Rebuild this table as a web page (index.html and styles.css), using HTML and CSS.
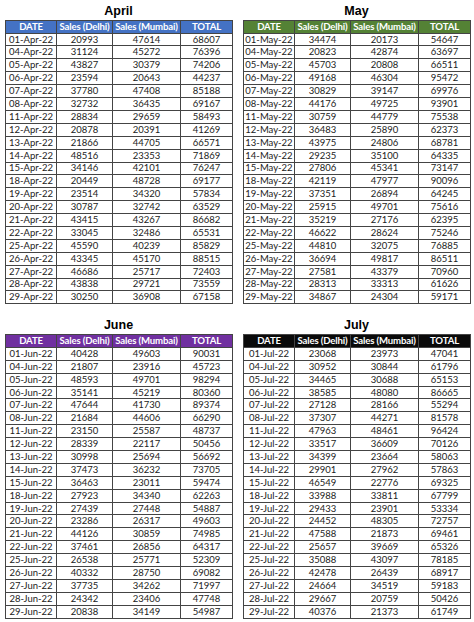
FILE: index.html
```html
<!DOCTYPE html>
<html>
<head>
<meta charset="utf-8">
<link rel="stylesheet" href="styles.css">
</head>
<body>
<div class="sheet" id="sheet"></div>
<script src="app.js"></script>
</body>
</html>
```
FILE: styles.css
```css
html, body {
  margin: 0;
  padding: 0;
  background: #ffffff;
}
.sheet {
  display: grid;
  grid-template-columns: 227px 227px;
  column-gap: 11px;
  row-gap: 13px;
  padding: 3px 0 0 5px;
}
.block {
  display: flex;
  flex-direction: column;
}
.title {
  height: 17px;
  line-height: 17px;
  text-align: center;
  font-family: "Liberation Sans", Arial, sans-serif;
  font-weight: bold;
  font-size: 12.5px;
  color: #000;
}
.tbl {
  width: 227px;
  border-collapse: collapse;
  table-layout: fixed;
  font-family: Lato, "Open Sans", sans-serif;
  font-size: 9.5px;
  color: #222;
  border: 1px solid #222;
}
.tbl th, .tbl td {
  border: 1px solid #444;
  padding: 0;
  text-align: center;
  white-space: nowrap;
  height: 11.9px;
  line-height: 10px;
}
.tbl th {
  color: #fff;
  font-weight: bold;
  font-size: 9.6px;
  letter-spacing: -0.15px;
  height: 11.6px;
}
.apr th { background: #4472c4; }
.may th { background: #548235; }
.jun th { background: #7030a0; }
.jul th { background: #0a0a0a; }
.c1 { width: 51px; }
.c2 { width: 56px; }
.c3 { width: 68px; }
.c4 { width: 52px; }
```
FILE: app.js
```js
const months = [
  {name: "April", cls: "apr", ab: "Apr", rows: [
    ["01",20993,47614,68607],["04",31124,45272,76396],["05",43827,30379,74206],["06",23594,20643,44237],
    ["07",37780,47408,85188],["08",32732,36435,69167],["11",28834,29659,58493],["12",20878,20391,41269],
    ["13",21866,44705,66571],["14",48516,23353,71869],["15",34146,42101,76247],["18",20449,48728,69177],
    ["19",23514,34320,57834],["20",30787,32742,63529],["21",43415,43267,86682],["22",33045,32486,65531],
    ["25",45590,40239,85829],["26",43345,45170,88515],["27",46686,25717,72403],["28",43838,29721,73559],
    ["29",30250,36908,67158]]},
  {name: "May", cls: "may", ab: "May", rows: [
    ["01",34474,20173,54647],["04",20823,42874,63697],["05",45703,20808,66511],["06",49168,46304,95472],
    ["07",30829,39147,69976],["08",44176,49725,93901],["11",30759,44779,75538],["12",36483,25890,62373],
    ["13",43975,24806,68781],["14",29235,35100,64335],["15",27806,45341,73147],["18",42119,47977,90096],
    ["19",37351,26894,64245],["20",25915,49701,75616],["21",35219,27176,62395],["22",46622,28624,75246],
    ["25",44810,32075,76885],["26",36694,49817,86511],["27",27581,43379,70960],["28",28313,33313,61626],
    ["29",34867,24304,59171]]},
  {name: "June", cls: "jun", ab: "Jun", rows: [
    ["01",40428,49603,90031],["04",21807,23916,45723],["05",48593,49701,98294],["06",35141,45219,80360],
    ["07",47644,41730,89374],["08",21684,44606,66290],["11",23150,25587,48737],["12",28339,22117,50456],
    ["13",30998,25694,56692],["14",37473,36232,73705],["15",36463,23011,59474],["18",27923,34340,62263],
    ["19",27439,27448,54887],["20",23286,26317,49603],["21",44126,30859,74985],["22",37461,26856,64317],
    ["25",26538,25771,52309],["26",40332,28750,69082],["27",37735,34262,71997],["28",24342,23406,47748],
    ["29",20838,34149,54987]]},
  {name: "July", cls: "jul", ab: "Jul", rows: [
    ["01",23068,23973,47041],["04",30952,30844,61796],["05",34465,30688,65153],["06",38585,48080,86665],
    ["07",27128,28166,55294],["08",37307,44271,81578],["11",47963,48461,96424],["12",33517,36609,70126],
    ["13",34399,23664,58063],["14",29901,27962,57863],["15",46549,22776,69325],["18",33988,33811,67799],
    ["19",29433,23901,53334],["20",24452,48305,72757],["21",47588,21873,69461],["22",25657,39669,65326],
    ["25",35088,43097,78185],["26",42478,26439,68917],["27",24664,34519,59183],["28",29667,20759,50426],
    ["29",40376,21373,61749]]}
];
const sheet = document.getElementById("sheet");
for (const m of months) {
  const block = document.createElement("div");
  block.className = "block";
  const t = document.createElement("div");
  t.className = "title";
  t.textContent = m.name;
  block.appendChild(t);
  const tbl = document.createElement("table");
  tbl.className = "tbl " + m.cls;
  let html = '<colgroup><col class="c1"><col class="c2"><col class="c3"><col class="c4"></colgroup>';
  html += '<tr><th>DATE</th><th>Sales (Delhi)</th><th>Sales (Mumbai)</th><th>TOTAL</th></tr>';
  for (const r of m.rows) {
    html += `<tr><td>${r[0]}-${m.ab}-22</td><td>${r[1]}</td><td>${r[2]}</td><td>${r[3]}</td></tr>`;
  }
  tbl.innerHTML = html;
  block.appendChild(tbl);
  sheet.appendChild(block);
}
```
